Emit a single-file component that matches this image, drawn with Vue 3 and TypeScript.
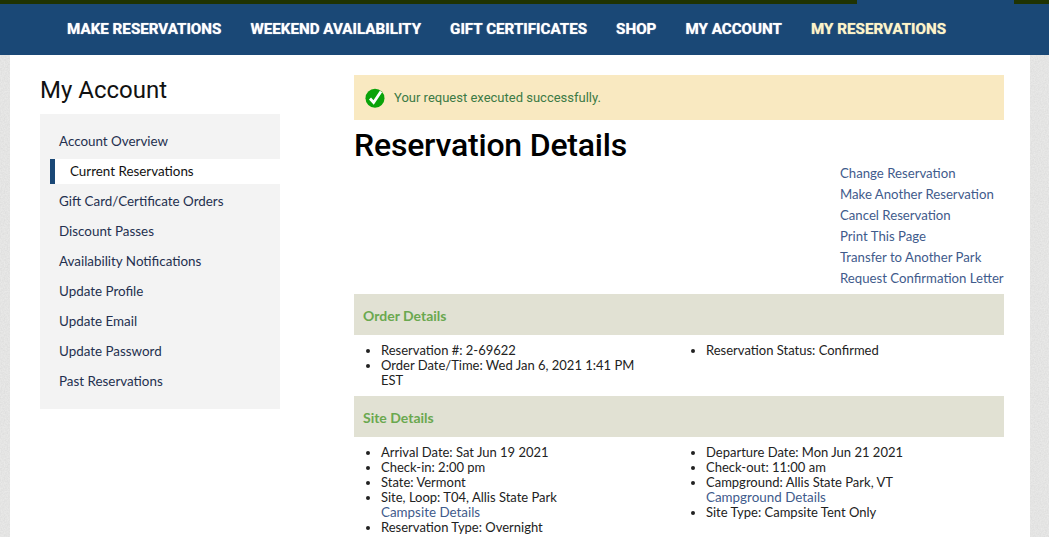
<script setup lang="ts">
const navItems: string[] = ['MAKE RESERVATIONS', 'WEEKEND AVAILABILITY', 'GIFT CERTIFICATES', 'SHOP', 'MY ACCOUNT']
const sideItems: string[] = ['Account Overview', 'Current Reservations', 'Gift Card/Certificate Orders', 'Discount Passes', 'Availability Notifications', 'Update Profile', 'Update Email', 'Update Password', 'Past Reservations']
const actions: string[] = ['Change Reservation', 'Make Another Reservation', 'Cancel Reservation', 'Print This Page', 'Transfer to Another Park', 'Request Confirmation Letter']
</script>

<template>
  <div class="page">
    <header class="header">
      <div class="strip">
        <div class="strip-left"></div>
        <div class="strip-notch"></div>
        <div class="strip-right"></div>
      </div>
      <nav class="nav">
        <a v-for="item in navItems" :key="item" class="nav-item">{{ item }}</a>
        <a class="nav-item nav-active">MY RESERVATIONS</a>
      </nav>
    </header>
    <div class="sheet">
      <aside class="side">
        <h2 class="side-title">My Account</h2>
        <ul class="side-menu">
          <li v-for="item in sideItems" :key="item" class="side-item" :class="{ current: item === 'Current Reservations' }">
            <span>{{ item }}</span>
          </li>
        </ul>
      </aside>
      <main class="main">
        <div class="alert">
          <svg class="check" viewBox="0 0 20 20" width="20" height="20">
            <circle cx="10" cy="10.3" r="9.5" fill="#0aa30a" />
            <path d="M5 10.5 L8.6 14.5 L16 3.5" fill="none" stroke="#fff" stroke-width="2.8" />
          </svg>
          <span>Your request executed successfully.</span>
        </div>
        <h1 class="title">Reservation Details</h1>
        <div class="actions">
          <div class="action-list">
            <a v-for="a in actions" :key="a" class="link action">{{ a }}</a>
          </div>
        </div>
        <h3 class="band">Order Details</h3>
        <div class="cols order">
          <ul>
            <li>Reservation #: 2-69622</li>
            <li>Order Date/Time: Wed Jan 6, 2021 1:41 PM EST</li>
          </ul>
          <ul>
            <li>Reservation Status: Confirmed</li>
          </ul>
        </div>
        <h3 class="band">Site Details</h3>
        <div class="cols">
          <ul>
            <li>Arrival Date: Sat Jun 19 2021</li>
            <li>Check-in: 2:00 pm</li>
            <li>State: Vermont</li>
            <li>Site, Loop: T04, Allis State Park<br /><a class="link">Campsite Details</a></li>
            <li>Reservation Type: Overnight</li>
          </ul>
          <ul>
            <li>Departure Date: Mon Jun 21 2021</li>
            <li>Check-out: 11:00 am</li>
            <li>Campground: Allis State Park, VT<br /><a class="link">Campground Details</a></li>
            <li>Site Type: Campsite Tent Only</li>
          </ul>
        </div>
      </main>
    </div>
  </div>
</template>

<style scoped>
.page {
  width: 1049px;
  height: 537px;
  overflow: hidden;
  background-color: #e9e9e8;
  background-image: url("data:image/svg+xml,%3Csvg xmlns='http://www.w3.org/2000/svg' width='200' height='200'%3E%3Cfilter id='n'%3E%3CfeTurbulence type='fractalNoise' baseFrequency='0.7' numOctaves='2'/%3E%3CfeColorMatrix values='0 0 0 0 0.55 0 0 0 0 0.55 0 0 0 0 0.55 0.5 0 0 0 -0.12'/%3E%3C/filter%3E%3Crect width='200' height='200' filter='url(%23n)'/%3E%3C/svg%3E");
  font-family: Lato, "Open Sans", sans-serif;
  color: #222;
}
.header {
  height: 55px;
  background: #1a4876;
}
.strip {
  display: flex;
  height: 4px;
}
.strip-left {
  width: 857px;
  background: #1f3303;
}
.strip-notch {
  width: 157px;
}
.strip-right {
  flex: 1;
  background: #1f3303;
}
.nav {
  display: flex;
  gap: 29px;
  padding: 15px 0 0 67px;
}
.nav-item {
  font-family: Roboto, sans-serif;
  font-weight: 700;
  font-size: 15.2px;
  line-height: 21px;
  color: #fff;
  text-shadow: 0 0 1px rgba(255, 255, 255, 0.8);
  white-space: nowrap;
}
.nav-active {
  color: #fdf4c9;
  text-shadow: 0 0 1px rgba(253, 244, 201, 0.8);
}
.sheet {
  display: flex;
  margin: 0 19px 0 10px;
  height: 482px;
  background: #fff;
  padding: 20px 26px 0 30px;
  box-sizing: border-box;
}
.side {
  width: 240px;
  margin-right: 74px;
  flex: none;
}
.side-title {
  margin: 0;
  font-family: Roboto, sans-serif;
  font-weight: 400;
  font-size: 24px;
  line-height: 30px;
  color: #111;
}
.side-menu {
  list-style: none;
  margin: 9px 0 0;
  padding: 12px 0 13px;
  background: #f3f3f3;
}
.side-item {
  height: 30px;
  line-height: 30px;
  padding-left: 19px;
  font-size: 13.4px;
  color: #24304f;
}
.side-item.current {
  height: 25px;
  line-height: 25px;
  margin: 3px 0 2px 10px;
  padding-left: 15px;
  background: #fff;
  border-left: 5px solid #1a4876;
  color: #111;
}
.main {
  flex: 1;
  min-width: 0;
}
.alert {
  display: flex;
  align-items: center;
  gap: 9px;
  height: 45px;
  padding-left: 11px;
  background: #f9e9c1;
  font-family: Roboto, sans-serif;
  font-size: 13px;
  color: #3c7a45;
}
.title {
  margin: 0;
  padding-top: 7px;
  font-family: Roboto, sans-serif;
  font-weight: 500;
  font-size: 32px;
  line-height: 36px;
  letter-spacing: -0.2px;
  color: #000;
}
.actions {
  display: flex;
  justify-content: flex-end;
}
.action-list {
  display: flex;
  flex-direction: column;
  width: 164px;
}
.action {
  line-height: 21px;
  white-space: nowrap;
  font-size: 13.2px;
}
.link {
  color: #3f5b8c;
}
.cols .link {
  font-size: 13.4px;
}
.band {
  margin: 5px 0 0;
  height: 41px;
  padding-left: 9px;
  line-height: 44px;
  background: #e1e1d3;
  font-size: 14px;
  font-weight: 700;
  color: #6aa84f;
}
.cols {
  display: grid;
  grid-template-columns: 325px 325px;
  font-size: 13px;
  line-height: 15px;
  color: #222;
}
.order {
  height: 56px;
}
.cols ul {
  margin: 0;
  padding: 8px 30px 0 27px;
}
</style>

<style>
html, body { margin: 0; background: #e9e9e8; }
</style>
